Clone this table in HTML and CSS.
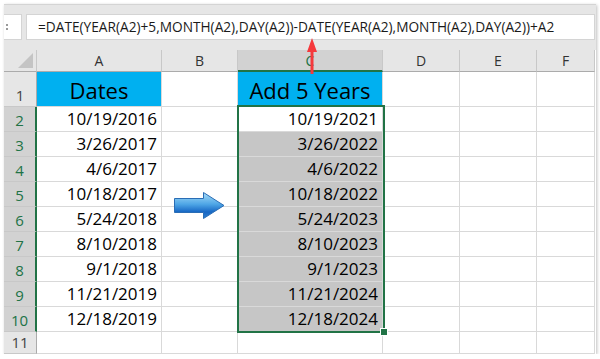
FILE: index.html
```html
<!DOCTYPE html>
<html lang="en">
<head>
    <meta charset="UTF-8">
    <title>Add 5 Years</title>
    <link rel="stylesheet" href="styles.css">
</head>
<body>
    <div class="window">
        <!-- formula bar -->
        <div class="formula-bar">
            <div class="name-box"><span class="dots"></span></div>
            <div class="formula-input">=DATE(YEAR(A2)+5,MONTH(A2),DAY(A2))-DATE(YEAR(A2),MONTH(A2),DAY(A2))+A2</div>
        </div>

        <!-- worksheet grid -->
        <div class="sheet">
            <div class="corner"><span class="tri"></span></div>
            <div class="col-head">A</div>
            <div class="col-head">B</div>
            <div class="col-head sel">C</div>
            <div class="col-head">D</div>
            <div class="col-head">E</div>
            <div class="col-head">F</div>

            <div class="row-head">1</div>
            <div class="cell title">Dates</div>
            <div class="cell"></div>
            <div class="cell title">Add 5 Years</div>
            <div class="cell"></div><div class="cell"></div><div class="cell"></div>

            <div class="row-head sel">2</div>
            <div class="cell num">10/19/2016</div>
            <div class="cell"></div>
            <div class="cell num">10/19/2021</div>
            <div class="cell"></div><div class="cell"></div><div class="cell"></div>

            <div class="row-head sel">3</div>
            <div class="cell num">3/26/2017</div>
            <div class="cell"></div>
            <div class="cell num shade">3/26/2022</div>
            <div class="cell"></div><div class="cell"></div><div class="cell"></div>

            <div class="row-head sel">4</div>
            <div class="cell num">4/6/2017</div>
            <div class="cell"></div>
            <div class="cell num shade">4/6/2022</div>
            <div class="cell"></div><div class="cell"></div><div class="cell"></div>

            <div class="row-head sel">5</div>
            <div class="cell num">10/18/2017</div>
            <div class="cell"></div>
            <div class="cell num shade">10/18/2022</div>
            <div class="cell"></div><div class="cell"></div><div class="cell"></div>

            <div class="row-head sel">6</div>
            <div class="cell num">5/24/2018</div>
            <div class="cell"></div>
            <div class="cell num shade">5/24/2023</div>
            <div class="cell"></div><div class="cell"></div><div class="cell"></div>

            <div class="row-head sel">7</div>
            <div class="cell num">8/10/2018</div>
            <div class="cell"></div>
            <div class="cell num shade">8/10/2023</div>
            <div class="cell"></div><div class="cell"></div><div class="cell"></div>

            <div class="row-head sel">8</div>
            <div class="cell num">9/1/2018</div>
            <div class="cell"></div>
            <div class="cell num shade">9/1/2023</div>
            <div class="cell"></div><div class="cell"></div><div class="cell"></div>

            <div class="row-head sel">9</div>
            <div class="cell num">11/21/2019</div>
            <div class="cell"></div>
            <div class="cell num shade">11/21/2024</div>
            <div class="cell"></div><div class="cell"></div><div class="cell"></div>

            <div class="row-head sel">10</div>
            <div class="cell num">12/18/2019</div>
            <div class="cell"></div>
            <div class="cell num shade">12/18/2024</div>
            <div class="cell"></div><div class="cell"></div><div class="cell"></div>

            <div class="row-head">11</div>
            <div class="cell"></div><div class="cell"></div><div class="cell"></div>
            <div class="cell"></div><div class="cell"></div><div class="cell"></div>

            <!-- selection C2:C10 -->
            <div class="selection"><span class="handle"></span></div>

            <!-- blue arrow between the columns -->
            <svg class="blue-arrow" width="54" height="30" viewBox="0 0 54 30">
                <defs>
                    <linearGradient id="blueFill" x1="0" y1="0" x2="0" y2="1">
                        <stop offset="0" stop-color="#a9dcf8"/>
                        <stop offset="0.45" stop-color="#4ea6e6"/>
                        <stop offset="0.75" stop-color="#1767c4"/>
                        <stop offset="1" stop-color="#2f7fd0"/>
                    </linearGradient>
                </defs>
                <path d="M2.5 7.5 H31.5 V1.5 L52 14.5 L31.5 27.5 V21.5 H2.5 Z" fill="url(#blueFill)" stroke="#2a6db5" stroke-width="1"/>
            </svg>

            <!-- red arrow pointing at the formula -->
            <svg class="red-arrow" width="12" height="36" viewBox="0 0 12 36">
                <path d="M6 0 L11 14 H7.5 V36 H4.5 V14 H1 Z" fill="#f5393c"/>
            </svg>
        </div>
    </div>
</body>
</html>
```

FILE: styles.css
```css
body {
    margin: 0;
    background: #fff;
    font-family: "Open Sans", "Noto Sans", sans-serif;
}
.window {
    position: relative;
    width: 592px;
    margin: 4px 0 0 4px;
    border-top: 1px solid #d4d4d4;
    background: #e6e6e6;
    box-shadow: 1px 1px 3px rgba(0, 0, 0, 0.25);
}
.formula-bar {
    display: flex;
    gap: 4px;
    height: 45px;
    padding-top: 9px;
    box-sizing: border-box;
}
.name-box {
    width: 18px;
    height: 26px;
    background: #fff;
    border: 1px solid #d4d4d4;
    border-left: none;
    box-sizing: border-box;
    position: relative;
}
.dots {
    position: absolute;
    left: 2px;
    top: 9px;
    width: 4px;
    height: 6px;
    border-left: 2px dotted #9a9a9a;
}
.formula-input {
    flex: 1;
    height: 26px;
    margin-right: 1px;
    background: #fff;
    border: 1px solid #d4d4d4;
    box-sizing: border-box;
    padding-left: 11px;
    font-size: 13.7px;
    line-height: 24px;
    color: #1a1a1a;
    white-space: nowrap;
    overflow: hidden;
}
.sheet {
    position: relative;
    display: grid;
    grid-template-columns: 33px 125px 76px 145px 77px 77px 58px;
    grid-template-rows: 22px 35px repeat(9, 25px) 22px;
    background: #fff;
}
.sheet > div {
    box-sizing: border-box;
}
.corner {
    position: relative;
    background: #e6e6e6;
    border-right: 1px solid #c8c8c8;
    border-bottom: 1px solid #ababab;
}
.tri {
    position: absolute;
    right: 3px;
    bottom: 3px;
    width: 0;
    height: 0;
    border-left: 15px solid transparent;
    border-bottom: 15px solid #c4c4c4;
}
.col-head {
    background: #e6e6e6;
    border-right: 1px solid #c8c8c8;
    border-bottom: 1px solid #ababab;
    text-align: center;
    font-size: 14px;
    line-height: 22px;
    color: #333;
}
.col-head.sel {
    background: #d2d2d2;
    border-bottom: 2px solid #217346;
    color: #217346;
}
.row-head {
    background: #e6e6e6;
    border-right: 1px solid #ababab;
    border-bottom: 1px solid #c8c8c8;
    text-align: center;
    font-size: 15px;
    color: #444;
    display: flex;
    align-items: flex-end;
    justify-content: center;
    padding-bottom: 1px;
}
.row-head.sel {
    background: #d2d2d2;
    border-right: 2px solid #217346;
    color: #217346;
}
.cell {
    border-right: 1px solid #d9d9d9;
    border-bottom: 1px solid #d9d9d9;
    font-size: 17px;
    line-height: 24px;
    color: #000;
    white-space: nowrap;
}
.num {
    text-align: right;
    padding-right: 4px;
}
.title {
    background: #00b0f0;
    text-align: center;
    font-size: 22px;
    line-height: 34px;
    padding-top: 1px;
}
.shade {
    background: #c6c6c6;
}
.selection {
    position: absolute;
    left: 233px;
    top: 55px;
    width: 148px;
    height: 228px;
    border: 2px solid #217346;
    box-sizing: border-box;
}
.handle {
    position: absolute;
    right: -5px;
    bottom: -5px;
    width: 6px;
    height: 6px;
    background: #217346;
    border: 1px solid #fff;
}
.blue-arrow {
    position: absolute;
    left: 168px;
    top: 141px;
}
.red-arrow {
    position: absolute;
    left: 302px;
    top: -12px;
}
```
